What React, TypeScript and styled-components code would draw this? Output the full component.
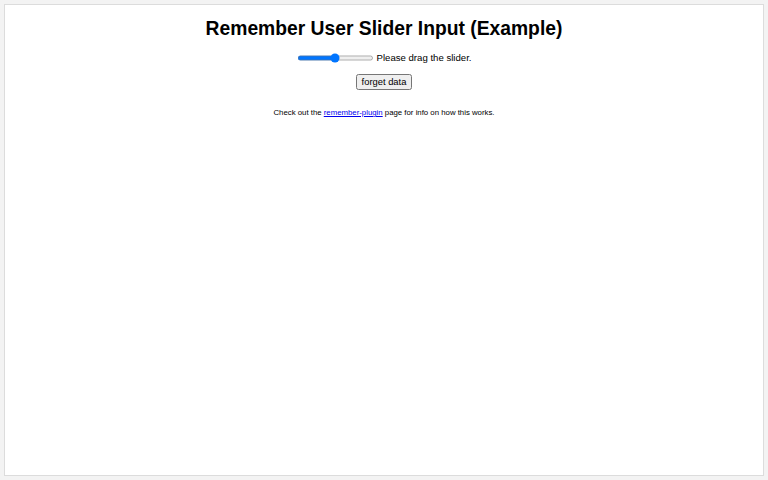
import React, { useState } from 'react'
import styled, { createGlobalStyle } from 'styled-components'

const GlobalStyle = createGlobalStyle`
  html, body {
    margin: 0;
    padding: 0;
    background: #f3f3f3;
  }
  body {
    padding: 4px;
    font-family: "Liberation Sans", Arial, sans-serif;
  }
`

const Page = styled.div`
  box-sizing: border-box;
  height: 472px;
  background: #fff;
  border: 1px solid #dcdcdc;
  display: flex;
  flex-direction: column;
  align-items: center;
  padding-top: 13px;
  color: #000;
`

const Title = styled.h1`
  margin: 0;
  font-size: 19.3px;
  font-weight: bold;
  line-height: 22px;
`

const SliderRow = styled.div`
  display: flex;
  align-items: center;
  height: 11px;
  margin-top: 12px;
  font-size: 9.6px;
`

// the native slider, shrunk as a whole so the thumb scales with the track
const Range = styled.input`
  width: 124px;
  margin: 0 4px 0 0;
  zoom: 0.625;
  accent-color: #0075ff;
`

const ForgetButton = styled.button`
  margin-top: 11px;
  font-family: "Liberation Sans", Arial, sans-serif;
  font-size: 9.4px;
  line-height: 10px;
  padding: 1px 4px;
`

const Note = styled.p`
  margin: 18px 0 0;
  font-size: 7.8px;
`

const Link = styled.a`
  color: #0000ee;
`

export default function App() {
  const [value, setValue] = useState(50)
  return (
    <>
      <GlobalStyle />
      <Page>
        <Title>Remember User Slider Input (Example)</Title>
        <SliderRow>
          <Range
            type="range"
            min={0}
            max={100}
            value={value}
            onChange={e => setValue(Number(e.target.value))}
          />
          Please drag the slider.
        </SliderRow>
        <ForgetButton onClick={() => setValue(50)}>forget data</ForgetButton>
        <Note>
          Check out the <Link href="#remember-plugin">remember-plugin</Link> page
          for info on how this works.
        </Note>
      </Page>
    </>
  )
}
